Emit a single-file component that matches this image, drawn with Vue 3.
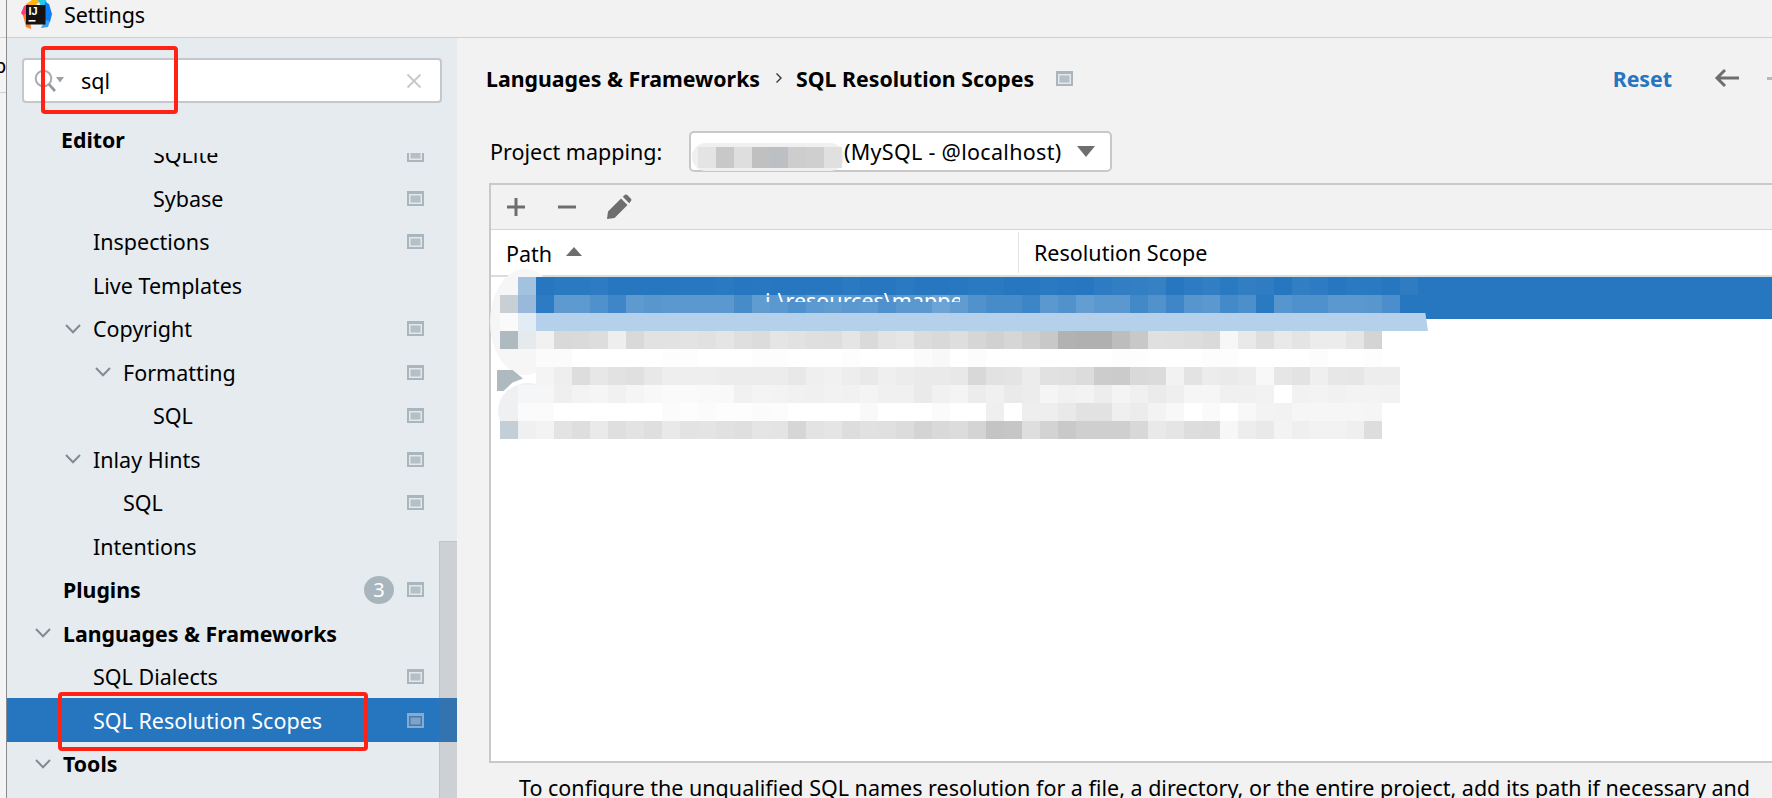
<script setup>
const rows = [
  { level: 3, label: 'SQLite', gear: true },
  { level: 3, label: 'Sybase', gear: true },
  { level: 1, label: 'Inspections', gear: true },
  { level: 1, label: 'Live Templates' },
  { level: 1, label: 'Copyright', gear: true, arrow: true },
  { level: 2, label: 'Formatting', gear: true, arrow: true },
  { level: 3, label: 'SQL', gear: true },
  { level: 1, label: 'Inlay Hints', gear: true, arrow: true },
  { level: 2, label: 'SQL', gear: true },
  { level: 1, label: 'Intentions' },
  { level: 0, label: 'Plugins', gear: true, bold: true, badge: 3 },
  { level: 0, label: 'Languages & Frameworks', bold: true, arrow: true },
  { level: 1, label: 'SQL Dialects', gear: true },
  { level: 1, label: 'SQL Resolution Scopes', gear: true, selected: true },
  { level: 0, label: 'Tools', bold: true, arrow: true },
]

const blue = (p) => {
  const v = Number(p) / 100
  const m = (c) => Math.round(c + (255 - c) * v)
  return `rgb(${m(38)},${m(119)},${m(192)})`
}
const gray = (h) => (h === '..' ? 'transparent' : h.length === 6 ? `#${h}` : `#${h}${h}${h}`)
const mosaic = [
  ['.. a3c2e0', '00 02 02 03 00 00 00 00 01 01 02 00 01 00 00 00 00 02 00 00 02 00 00 01 02 02 00 00 02 01 00 03 05 06 07 00 03 05 02 05 04 00 05 03 00 02 02 00 04'],
  ['c8d0d6 9ab9da', '03 26 26 19 11 26 23 24 24 24 24 15 27 24 19 25 27 24 26 19 24 24 33 27 20 15 15 10 24 20 28 24 24 13 20 11 22 24 14 18 02 22 19 19 24 24 23 17'],
  ['fafafa e2ecf5', ''],
  ['aeb9c0 e6eaed f1 d9 da dd ee d9 e2 e2 e3 e1 e5 df dc e5 e2 df de e5 da e3 e6 dc d9 de d6 d1 d6 d0 c8 b2 b0 b0 bd c8 e0 df dd da f7 e9 de e9 e4 ec ec e5 d4', ''],
  ['.. .. fb fb ff ff ff ff ff fd fd ff ff ff fd fd ff ff ff fd ff ff ff fb f8 ff fc ff ff ff ff ff ff ff fd fd ff ff ff fd fd ff ff ff ff fc ff ff fd', ''],
  ['.. .. f4 ee dd e7 e2 e0 e8 ee ee ee ec ec ec ec e8 ef f1 ed e9 ef ec ea ea e8 d8 e2 e4 ec e1 e0 dc cc cb d9 db f2 e3 ec ea ed f8 e6 e3 ef e7 e6 ed ed', ''],
  ['.. f5f6f8 f6 ef f3 f5 f1 f5 f8 fa fa f9 f9 f1 f4 f3 f1 f0 f2 f1 f4 f0 f0 ea f1 f4 ec f0 ea ec f5 f1 f3 ed f4 f0 eb ef f6 f6 f0 f0 f2 ff f2 f3 f1 f3 f3 f2', ''],
  ['.. fafbfa fb ff ff ff ff ff ff fb fd fb fd fd fb fc ff ff ff ff f9 ff ff ff fb ff ff ef ff ee ee e9 e2 e2 ef ec f3 f8 ff fa ff f8 f3 f2 f6 f6 f6 f6 f5', ''],
  ['c4ced6 eff0f2 f3 e3 de ea df e3 df e9 e3 e4 e1 df e5 e4 d6 e3 e5 dd e1 e0 dc d4 d9 dc d4 c4 c6 de d3 c9 cf cf cf d8 e9 e5 dd dc f7 ed e9 f3 ef f2 f2 ef dd', ''],
].map(([g, b]) => [
  ...g.split(' ').map(gray),
  ...(b ? b.split(' ').map(blue) : []),
])
const mapBlur = ['e4', 'c8', 'de', 'c0', 'bcc0c4', 'cd', 'cf', 'e0'].map((h) => gray(h))
</script>

<template>
  <div class="window">
    <div class="strip">
      <span class="strip-letter">p</span>
      <span class="strip-rule strip-rule-a"></span>
      <span class="strip-rule strip-rule-b"></span>
    </div>
    <div class="frame">
      <header class="titlebar">
        <svg class="logo" width="32" height="30" viewBox="0 0 32 30">
          <path d="M3 6 L12 1 L12 12 L4 18 L0 13 Z" fill="#ff3a7c" />
          <path d="M2 15 L9 12 L10 29 L5 27 Z" fill="#fd7c2a" />
          <path d="M5 4 L11 0 L20 0 L14 6 Z" fill="#fdb60d" />
          <path d="M17 0 L25 0 L27 6 L20 6 Z" fill="#22c8e8" />
          <path d="M24 2 L28 4 L31 14 L29 22 L24 27 L22 22 Z" fill="#0f7df2" />
          <path d="M24 20 L29 21 L27 27 L20 28 Z" fill="#3aa2f5" />
          <rect x="5" y="5" width="19.5" height="19.5" fill="#17120f" />
          <text class="logo-text" x="7.5" y="14.5">IJ</text>
          <rect x="7.5" y="20" width="7" height="1.6" fill="#fff" />
        </svg>
        <span class="title">Settings</span>
      </header>

      <div class="content">
        <aside class="sidebar">
          <div class="search">
            <svg class="search-icon" width="30" height="24" viewBox="0 0 30 24">
              <circle cx="9.5" cy="9.5" r="7.8" fill="none" stroke="#a7adb1" stroke-width="2" />
              <path d="M14.8 15.2 L21 22" stroke="#8f989d" stroke-width="2.6" />
              <path d="M22 8 H30 L26 13.5 Z" fill="#9aa1a6" />
            </svg>
            <span class="search-value">sql</span>
            <svg class="search-clear" width="16" height="16" viewBox="0 0 16 16">
              <path d="M1.5 1.5 L14.5 14.5 M14.5 1.5 L1.5 14.5" stroke="#c3c8cb" stroke-width="1.8" />
            </svg>
          </div>
          <div class="tree">
            <div class="sticky-head">Editor</div>
            <div class="scrollbar"></div>
            <div
              v-for="(row, i) in rows"
              :key="i"
              class="row"
              :class="[`lv${row.level}`, { selected: row.selected, bold: row.bold }]"
            >
              <svg v-if="row.arrow" class="chevron" width="16" height="10" viewBox="0 0 16 10">
                <path d="M1 1 L8 8.2 L15 1" fill="none" stroke="#848a8f" stroke-width="2" />
              </svg>
              <span class="row-label">{{ row.label }}</span>
              <span v-if="row.badge" class="badge">{{ row.badge }}</span>
              <span v-if="row.gear" class="page-icon"></span>
            </div>
          </div>
        </aside>

        <main class="panel">
          <div class="crumbs">
            <span class="crumb">Languages &amp; Frameworks</span>
            <svg class="crumb-sep" width="8" height="12" viewBox="0 0 8 12">
              <path d="M1.5 1.5 L6 6 L1.5 10.5" fill="none" stroke="#333" stroke-width="1.4" />
            </svg>
            <span class="crumb">SQL Resolution Scopes</span>
            <span class="page-icon crumb-icon"></span>
            <span class="reset">Reset</span>
            <svg class="nav-back" width="26" height="20" viewBox="0 0 26 20">
              <path d="M25 10 H3 M11 2 L3 10 L11 18" fill="none" stroke="#6e6e6e" stroke-width="3" />
            </svg>
            <span class="nav-forward"></span>
          </div>

          <div class="mapping">
            <span class="mapping-label">Project mapping:</span>
            <div class="dropdown">
              <div class="map-glow"></div>
              <div class="map-blur">
                <span v-for="(c, i) in mapBlur" :key="i" class="map-cell" :style="{ background: c }"></span>
              </div>
              <span class="dropdown-value">(MySQL - @localhost)</span>
              <span class="dropdown-caret"></span>
            </div>
          </div>

          <section class="table">
            <div class="toolbar">
              <svg width="20" height="20" viewBox="0 0 20 20">
                <path d="M10 1 V19 M1 10 H19" stroke="#6e6e6e" stroke-width="3" />
              </svg>
              <svg width="20" height="20" viewBox="0 0 20 20">
                <path d="M1 10 H19" stroke="#6e6e6e" stroke-width="3" />
              </svg>
              <svg width="26" height="26" viewBox="0 0 26 26">
                <path d="M1 25 L2 17.5 L15 4.5 L21.5 11 L8.5 24 Z M16.8 2.7 L19 .8 Q20 0 21 .8 L25 4.8 Q26 6 25 7 L23.2 9.2 Z" fill="#6e6e6e" />
              </svg>
            </div>
            <div class="thead">
              <div class="th">Path <span class="sort"></span></div>
              <div class="th th-last">Resolution Scope</div>
            </div>
            <div class="tbody">
              <div class="selection"></div>
              <div class="blob blob-a"></div>
              <div class="blob blob-b"></div>
              <div class="folder"></div>
              <div class="mosaic">
                <div v-for="(cells, r) in mosaic" :key="r" class="mosaic-row">
                  <span v-for="(c, i) in cells" :key="i" class="mosaic-cell" :style="{ background: c }"></span>
                </div>
                <div class="band"></div>
                <div class="peek">i-\resources\mappers</div>
              </div>
            </div>
          </section>

          <p class="help">To configure the unqualified SQL names resolution for a file, a directory, or the entire project, add its path if necessary and</p>
        </main>
      </div>
    </div>

    <div class="callout callout-search"></div>
    <div class="callout callout-scope"></div>
  </div>
</template>

<style>
html, body { margin: 0; overflow: hidden; }
</style>

<style scoped>
.window {
  position: relative;
  display: flex;
  width: 1772px;
  height: 798px;
  overflow: hidden;
  font-family: "Noto Sans", "Liberation Sans", sans-serif;
  font-size: 21.5px;
  color: #000;
  background: #f2f2f2;
}
.strip {
  position: relative;
  flex: 0 0 6px;
  background: #f4f4f4;
  border-right: 1px solid #8b8b8b;
  overflow: hidden;
}
.strip-letter { position: absolute; left: -6px; top: 52px; font-size: 20px; }
.strip-rule { position: absolute; left: 0; width: 6px; height: 1px; background: #d0d0d0; }
.strip-rule-a { top: 37px; }
.strip-rule-b { top: 92px; }
.frame { flex: 1; display: flex; flex-direction: column; min-width: 0; }
.titlebar {
  flex: 0 0 37px;
  display: flex;
  align-items: flex-start;
  padding-left: 14px;
  background: #f2f2f2;
  border-bottom: 1px solid #cfcfcf;
}
.logo { display: block; }
.logo-text { font-family: "Liberation Sans", sans-serif; font-size: 11px; font-weight: 700; fill: #fff; }
.title { margin-left: 11px; line-height: 29px; letter-spacing: -0.1px; }
.content { flex: 1; display: flex; min-height: 0; }
.sidebar {
  flex: 0 0 450px;
  display: flex;
  flex-direction: column;
  background: #e6ebf0;
}
.search {
  box-sizing: border-box;
  display: flex;
  align-items: center;
  height: 45px;
  margin: 20px 15px 10px;
  padding: 0 18px 0 10px;
  background: #fff;
  border: 2px solid #c4c8cc;
  border-radius: 4px;
}
.search-value { margin-left: 17px; flex: 1; }
.tree { position: relative; flex: 1; padding-top: 19.75px; overflow: hidden; }
.sticky-head {
  position: absolute;
  z-index: 2;
  left: 0;
  top: 0;
  width: 100%;
  height: 40px;
  padding-left: 54px;
  box-sizing: border-box;
  background: #e6ebf0;
  font-weight: 700;
  font-size: 21.3px;
  line-height: 54px;
}
.scrollbar {
  position: absolute;
  right: 0;
  top: 428px;
  bottom: 0;
  width: 18px;
  box-sizing: border-box;
  background: #cdd1d6;
  border-left: 1px solid #c0c4c9;
  border-top: 1px solid #c0c4c9;
}
.row {
  position: relative;
  box-sizing: border-box;
  height: 43.5px;
  display: flex;
  align-items: center;
  padding-right: 33px;
}
.lv0 { padding-left: 56px; }
.lv1 { padding-left: 86px; }
.lv2 { padding-left: 116px; }
.lv3 { padding-left: 146px; }
.row.bold { font-weight: 700; font-size: 21.3px; }
.row.selected { background: #2675bf; color: #fff; }
.row.selected::after {
  content: "";
  position: absolute;
  right: 0;
  top: 0;
  bottom: 0;
  width: 18px;
  background: rgba(110, 110, 110, 0.18);
}
.chevron { position: absolute; top: 17px; margin-left: -28px; }
.row-label { flex: 1; white-space: nowrap; }
.badge {
  width: 30px;
  height: 28px;
  margin-right: 13px;
  border-radius: 50%;
  background: #a9b5bd;
  color: #fff;
  font-weight: 400;
  font-size: 20px;
  line-height: 28px;
  text-align: center;
}
.page-icon {
  box-sizing: border-box;
  flex: 0 0 17px;
  width: 17px;
  height: 15px;
  background: #b4bfc6;
  border: 2px solid #a9b6bd;
  border-top-width: 3px;
  box-shadow: inset 0 0 0 1.5px #e2e8ec;
}
.selected .page-icon {
  background: #7fa2c6;
  border-color: #8fa9c4;
  box-shadow: inset 0 0 0 1.5px #3a7dbd;
}
.panel { flex: 1; min-width: 0; display: flex; flex-direction: column; }
.crumbs {
  height: 80px;
  display: flex;
  align-items: center;
  padding-left: 29px;
  font-weight: 700;
  font-size: 21.3px;
  flex: none;
}
.crumb-sep { margin: 0 13px 0 15px; }
.crumb-icon { margin-left: 22px; }
.reset { margin-left: auto; color: #2675bf; }
.nav-back { margin-left: 42px; }
.nav-forward { width: 5px; height: 3px; margin-left: 27px; background: #b8b8b8; }
.mapping {
  display: flex;
  align-items: center;
  height: 41px;
  margin: 13px 0 11px 33px;
  flex: none;
}
.mapping-label { width: 199px; }
.dropdown {
  position: relative;
  box-sizing: border-box;
  display: flex;
  align-items: center;
  width: 423px;
  height: 41px;
  padding-left: 153px;
  background: #fff;
  border: 2px solid #c8c8c8;
  border-radius: 5px;
}
.dropdown-value { letter-spacing: 0.3px; white-space: nowrap; }
.map-glow {
  position: absolute;
  left: 1px;
  top: 10px;
  width: 152px;
  height: 28px;
  border-radius: 14px;
  background: #f0f0f0;
}
.map-blur { position: absolute; left: 7px; top: 14px; display: flex; }
.map-cell { width: 18px; height: 21px; }
.dropdown-caret {
  margin-left: 15px;
  width: 0;
  height: 0;
  border-left: 9px solid transparent;
  border-right: 9px solid transparent;
  border-top: 11px solid #6e6e6e;
}
.table {
  box-sizing: border-box;
  height: 580px;
  margin-left: 32px;
  border: 2px solid #c9c9c9;
  border-right: 0;
  flex: none;
  display: flex;
  flex-direction: column;
}
.toolbar {
  box-sizing: border-box;
  flex: 0 0 45px;
  display: flex;
  align-items: center;
  gap: 31px;
  padding-left: 15px;
  border-bottom: 1px solid #d4d4d4;
}
.toolbar svg:last-child { margin-left: -2px; }
.thead {
  flex: 0 0 47px;
  box-sizing: border-box;
  display: grid;
  grid-template-columns: 527px 1fr;
  background: #fff;
  border-bottom: 2px solid #dcdcdc;
  padding-top: 2px;
}
.th { display: flex; align-items: center; padding-left: 15px; white-space: pre; }
.th-last { border-left: 1px solid #e3e3e3; height: 41px; }
.sort {
  margin-left: 8px;
  margin-bottom: 4px;
  width: 0;
  height: 0;
  border-left: 8px solid transparent;
  border-right: 8px solid transparent;
  border-bottom: 9px solid #6e6e6e;
}
.tbody { position: relative; flex: 1; background: #fff; overflow: visible; }
.selection { height: 42px; margin-left: 45px; background: #2677c0; }
.blob { position: absolute; background: #f6f6f6; border-radius: 50%; }
.blob-a { left: -1px; top: -8px; width: 70px; height: 106px; }
.blob-b { left: 7px; top: 106px; width: 60px; height: 56px; background: #eef0f1; }
.folder {
  position: absolute;
  left: 6px;
  top: 93px;
  width: 26px;
  height: 21px;
  background: #aeb9c0;
  clip-path: polygon(0 0, 60% 0, 100% 40%, 60% 60%, 25% 100%, 0 100%);
}
.mosaic { position: absolute; left: 9px; top: 0; }
.mosaic-row { display: flex; height: 18px; }
.mosaic-cell { flex: 0 0 18px; height: 18px; }
.band {
  position: absolute;
  left: 36px;
  top: 36px;
  width: 892px;
  height: 18px;
  background: #b5d0ea;
  clip-path: polygon(0 0, 99.7% 0, 100% 100%, 0 100%);
}
.peek {
  position: absolute;
  left: 265px;
  top: 14px;
  width: 195px;
  height: 11px;
  overflow: hidden;
  color: #fff;
  line-height: 20px;
  white-space: nowrap;
}
.help {
  margin: 11px 0 0 62px;
  line-height: 28px;
  white-space: nowrap;
}
.callout {
  position: absolute;
  z-index: 5;
  box-sizing: border-box;
  border: 4px solid #ff2215;
  border-radius: 4px;
}
.callout-search { left: 41px; top: 46px; width: 137px; height: 68px; }
.callout-scope { left: 58px; top: 692px; width: 310px; height: 59px; }
</style>
